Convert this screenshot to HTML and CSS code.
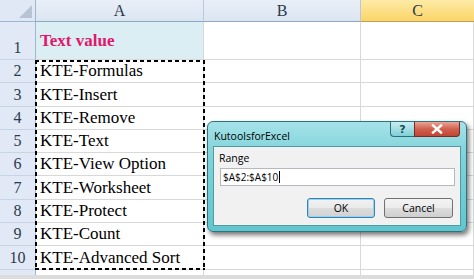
FILE: index.html
```html
<!DOCTYPE html>
<html>
<head>
<meta charset="utf-8">
<link rel="stylesheet" href="styles.css">
</head>
<body>
<div class="sheet">
  <div class="corner"><span class="tri"></span></div>
  <div class="ch">A</div>
  <div class="ch">B</div>
  <div class="ch hot">C</div>

  <div class="rh">1</div>
  <div class="c a1">Text value</div>
  <div class="c"></div>
  <div class="c"></div>

  <div class="rh">2</div><div class="c">KTE-Formulas</div><div class="c"></div><div class="c"></div>
  <div class="rh">3</div><div class="c">KTE-Insert</div><div class="c"></div><div class="c"></div>
  <div class="rh">4</div><div class="c">KTE-Remove</div><div class="c"></div><div class="c"></div>
  <div class="rh">5</div><div class="c">KTE-Text</div><div class="c"></div><div class="c"></div>
  <div class="rh">6</div><div class="c">KTE-View Option</div><div class="c"></div><div class="c"></div>
  <div class="rh">7</div><div class="c">KTE-Worksheet</div><div class="c"></div><div class="c"></div>
  <div class="rh">8</div><div class="c">KTE-Protect</div><div class="c"></div><div class="c"></div>
  <div class="rh">9</div><div class="c">KTE-Count</div><div class="c"></div><div class="c"></div>
  <div class="rh">10</div><div class="c">KTE-Advanced Sort</div><div class="c"></div><div class="c"></div>
  <div class="rh">11</div><div class="c"></div><div class="c"></div><div class="c"></div>
</div>

<div class="ants"></div>

<div class="dialog">
  <div class="titlebar">
    <span class="title">KutoolsforExcel</span>
    <div class="tbtns">
      <span class="tb help">?</span>
      <span class="tb close">
        <svg width="12" height="10" viewBox="0 0 12 10"><path d="M2 1.5 L10 8.5 M10 1.5 L2 8.5" stroke="#fff" stroke-width="2.4" stroke-linecap="square"/></svg>
      </span>
    </div>
  </div>
  <div class="panel">
    <div class="label">Range</div>
    <div class="input"><span>$A$2:$A$10</span><span class="caret"></span></div>
    <div class="btnrow">
      <span class="btn ok">OK</span>
      <span class="btn">Cancel</span>
    </div>
  </div>
</div>
</body>
</html>
```

FILE: styles.css
```css
html, body {
  margin: 0;
  padding: 0;
}
body {
  width: 474px;
  height: 279px;
  overflow: hidden;
  position: relative;
  background: #dcdcdc;
}
.sheet {
  display: grid;
  grid-template-columns: 36px 168px 157px 113px;
  grid-template-rows: 22px 38px repeat(10, 23.3px);
  height: 275px;
  overflow: hidden;
  background: #fff;
  font-family: "Liberation Serif", "Times New Roman", serif;
}
.corner {
  background: #dfe8f4;
  border-right: 1px solid #9eb6ce;
  border-bottom: 1px solid #9eb6ce;
  display: flex;
  justify-content: flex-end;
  align-items: flex-end;
  padding: 0 3px 3px 0;
  box-sizing: border-box;
}
.tri {
  width: 13px;
  height: 13px;
  background: #b7c3d2;
  clip-path: polygon(100% 0, 100% 100%, 0 100%);
}
.ch {
  background: linear-gradient(#e9eff7, #dbe5f1);
  border-right: 1px solid #b9c9dc;
  border-bottom: 1px solid #91a7c0;
  box-sizing: border-box;
  display: flex;
  align-items: center;
  justify-content: center;
  font-size: 16px;
  color: #2b3a4d;
  padding-top: 1px;
}
.ch.hot {
  background: linear-gradient(#fdeaa6, #fbd568);
  border-bottom-color: #b9a05c;
  border-right: none;
}
.rh {
  background: #e0e9f5;
  border-right: 1px solid #9eb6ce;
  border-bottom: 1px solid #c6d4e6;
  box-sizing: border-box;
  display: flex;
  justify-content: center;
  align-items: flex-end;
  font-size: 16px;
  color: #2b3a4d;
  line-height: 18px;
  padding-bottom: 2px;
}
.c {
  border-right: 1px solid #d8d8d8;
  border-bottom: 1px solid #d8d8d8;
  box-sizing: border-box;
  display: flex;
  align-items: flex-end;
  padding: 0 0 2px 4px;
  font-size: 17px;
  line-height: 19px;
  color: #000;
  white-space: nowrap;
}
.c.a1 {
  background: #daeef3;
  align-items: center;
  padding-bottom: 0;
  color: #e2176d;
  font-weight: bold;
}
.ants {
  position: absolute;
  left: 35px;
  top: 60px;
  width: 170px;
  height: 210px;
  background:
    repeating-linear-gradient(90deg, #000 0 4px, transparent 4px 7px) top left / 100% 2px no-repeat,
    repeating-linear-gradient(90deg, #000 0 4px, transparent 4px 7px) bottom left / 100% 2px no-repeat,
    repeating-linear-gradient(180deg, #000 0 4px, transparent 4px 7px) top left / 2px 100% no-repeat,
    repeating-linear-gradient(180deg, #000 0 4px, transparent 4px 7px) top right / 2px 100% no-repeat;
}
.dialog {
  position: absolute;
  left: 207px;
  top: 121px;
  width: 260px;
  height: 111px;
  box-sizing: border-box;
  border: 1px solid #2f7380;
  border-radius: 6px;
  background: linear-gradient(#a5e2e8 0%, #7fd3da 30%, #62c6ce 100%);
  box-shadow: 2px 3px 5px rgba(0, 0, 0, 0.55);
  display: flex;
  flex-direction: column;
  padding: 0 5px 5px 5px;
  font-family: "Open Sans", "DejaVu Sans", sans-serif;
}
.titlebar {
  height: 24px;
  display: flex;
  justify-content: space-between;
  align-items: flex-start;
}
.title {
  font-size: 10.5px;
  color: #000;
  margin-top: 7px;
  margin-left: 1px;
}
.tbtns {
  display: flex;
  margin-right: 1px;
}
.tb {
  height: 15px;
  box-sizing: border-box;
  display: flex;
  align-items: center;
  justify-content: center;
  border: 1px solid #2f6c78;
  border-top: none;
}
.help {
  width: 24px;
  border-radius: 0 0 0 4px;
  background: linear-gradient(#c6eef2, #7fcfd6);
  color: #1d4d57;
  font-size: 11px;
  font-weight: bold;
  font-family: "DejaVu Sans", sans-serif;
  line-height: 1;
  border-right: none;
}
.close {
  width: 46px;
  border-radius: 0 0 4px 0;
  background: linear-gradient(#e9a597 0%, #d0614f 50%, #c24534 100%);
  border-color: #7a2a22;
}
.panel {
  flex: 1;
  background: #f1f1f1;
  border: 1px solid #4f9aa3;
  display: flex;
  flex-direction: column;
  padding: 4px 7px 7px 6px;
  font-size: 10.5px;
  color: #000;
}
.label {
  line-height: 14px;
  margin-left: -1px;
}
.input {
  margin-top: 3px;
  height: 18px;
  box-sizing: border-box;
  border: 1px solid #b5b8bd;
  background: #fff;
  display: flex;
  align-items: center;
  padding-left: 2px;
  font-size: 10px;
  margin-right: -2px;
}
.caret {
  width: 1px;
  height: 12px;
  background: #000;
  margin-left: 1px;
}
.btnrow {
  margin-top: auto;
  display: flex;
  justify-content: flex-end;
  gap: 9px;
}
.btn {
  width: 69px;
  height: 20px;
  box-sizing: border-box;
  border: 1px solid #707070;
  border-radius: 3px;
  background: linear-gradient(#f3f3f3 0%, #ebebeb 50%, #dddddd 51%, #cfcfcf 100%);
  display: flex;
  align-items: center;
  justify-content: center;
  font-size: 10.5px;
}
.btn.ok {
  width: 68px;
  border-color: #3c7fb1;
  box-shadow: inset 0 0 0 1px #8fd7ee;
  background: linear-gradient(#eaf6fd 0%, #d9f0fc 50%, #bee6fd 51%, #a7d9f5 100%);
  background: linear-gradient(#f2f2f2 0%, #e9e9e9 50%, #dcdcdc 51%, #d2d2d2 100%);
}
```
